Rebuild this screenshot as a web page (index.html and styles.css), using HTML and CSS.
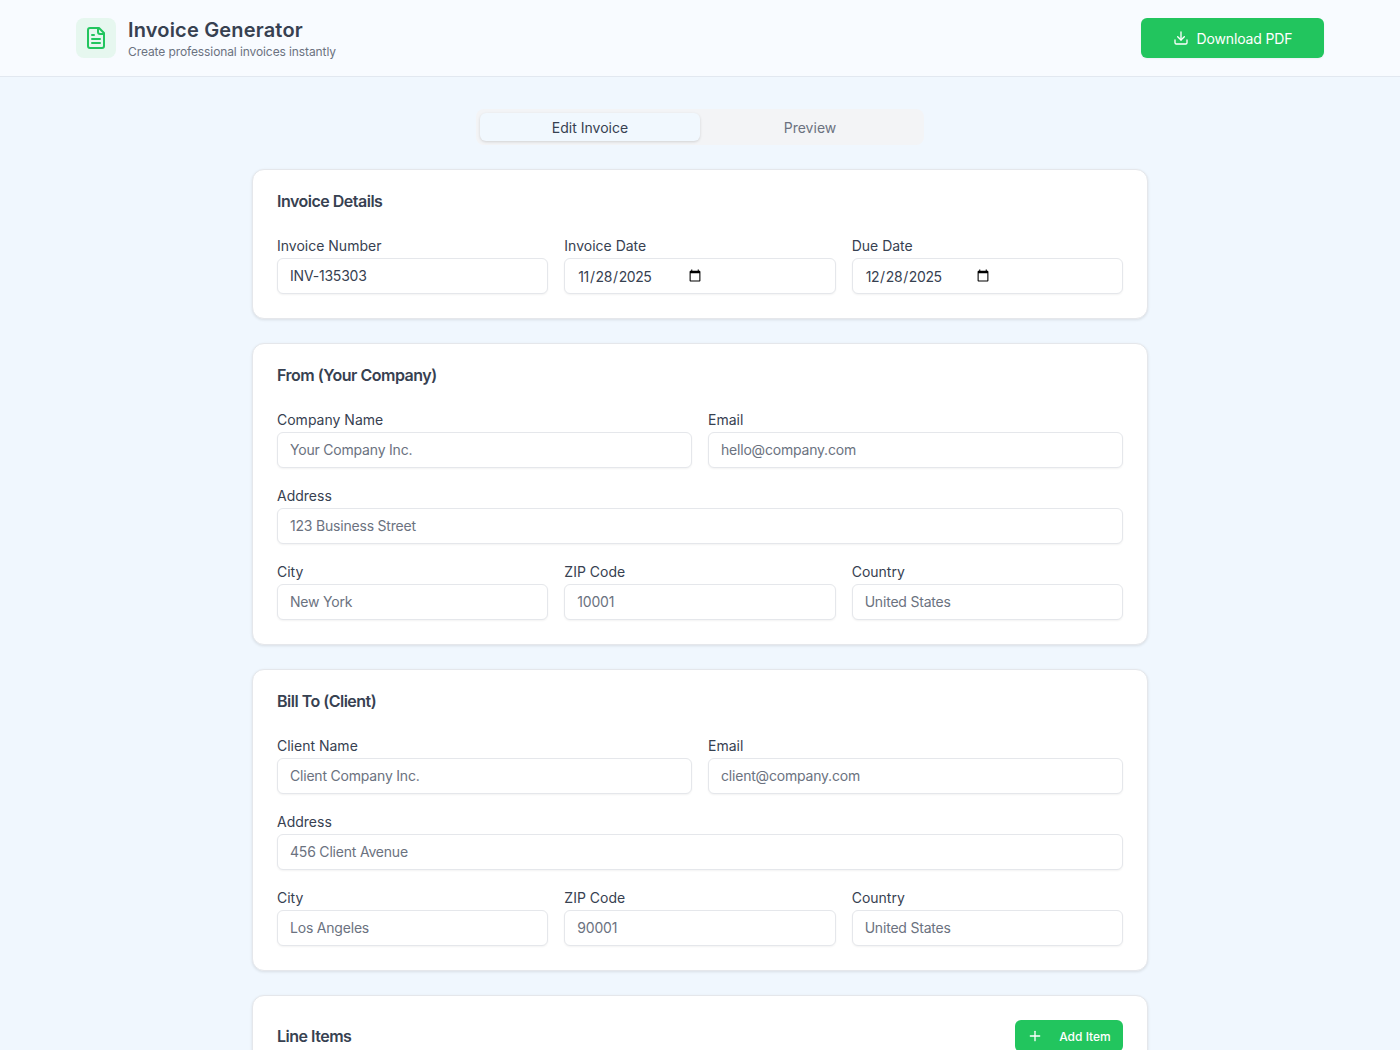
FILE: index.html
```html
<!DOCTYPE html>
<html lang="en">
<head>
<meta charset="utf-8">
<title>Invoice Generator</title>
<link rel="stylesheet" href="styles.css">
</head>
<body>
<header class="topbar">
  <div class="topbar-inner">
    <div class="brand">
      <div class="brand-icon">
        <svg width="24" height="24" viewBox="0 0 24 24" fill="none" stroke="#22c55e" stroke-width="2" stroke-linecap="round" stroke-linejoin="round"><path d="M15 2H6a2 2 0 0 0-2 2v16a2 2 0 0 0 2 2h12a2 2 0 0 0 2-2V7Z"/><path d="M14 2v4a2 2 0 0 0 2 2h4"/><path d="M10 9H8"/><path d="M16 13H8"/><path d="M16 17H8"/></svg>
      </div>
      <div>
        <h1 class="brand-title">Invoice Generator</h1>
        <p class="brand-sub">Create professional invoices instantly</p>
      </div>
    </div>
    <button class="btn btn-download">
      <svg width="16" height="16" viewBox="0 0 24 24" fill="none" stroke="currentColor" stroke-width="2" stroke-linecap="round" stroke-linejoin="round"><path d="M21 15v4a2 2 0 0 1-2 2H5a2 2 0 0 1-2-2v-4"/><polyline points="7 10 12 15 17 10"/><line x1="12" y1="15" x2="12" y2="3"/></svg>
      Download PDF
    </button>
  </div>
</header>
<main class="page">
  <div class="tabs">
    <div class="tab tab-active">Edit Invoice</div>
    <div class="tab">Preview</div>
  </div>

  <section class="card">
    <h2 class="card-title">Invoice Details</h2>
    <div class="rows">
      <div class="grid-3">
        <div><label class="label">Invoice Number</label><input class="input input-value" value="INV-135303"></div>
        <div><label class="label">Invoice Date</label><input class="input input-value input-date" type="date" value="2025-11-28"></div>
        <div><label class="label">Due Date</label><input class="input input-value input-date" type="date" value="2025-12-28"></div>
      </div>
    </div>
  </section>

  <section class="card">
    <h2 class="card-title">From (Your Company)</h2>
    <div class="rows">
      <div class="grid-2">
        <div><label class="label">Company Name</label><input class="input" placeholder="Your Company Inc."></div>
        <div><label class="label">Email</label><input class="input" placeholder="hello@company.com"></div>
      </div>
      <div><label class="label">Address</label><input class="input" placeholder="123 Business Street"></div>
      <div class="grid-3">
        <div><label class="label">City</label><input class="input" placeholder="New York"></div>
        <div><label class="label">ZIP Code</label><input class="input" placeholder="10001"></div>
        <div><label class="label">Country</label><input class="input" placeholder="United States"></div>
      </div>
    </div>
  </section>

  <section class="card">
    <h2 class="card-title">Bill To (Client)</h2>
    <div class="rows">
      <div class="grid-2">
        <div><label class="label">Client Name</label><input class="input" placeholder="Client Company Inc."></div>
        <div><label class="label">Email</label><input class="input" placeholder="client@company.com"></div>
      </div>
      <div><label class="label">Address</label><input class="input" placeholder="456 Client Avenue"></div>
      <div class="grid-3">
        <div><label class="label">City</label><input class="input" placeholder="Los Angeles"></div>
        <div><label class="label">ZIP Code</label><input class="input" placeholder="90001"></div>
        <div><label class="label">Country</label><input class="input" placeholder="United States"></div>
      </div>
    </div>
  </section>

  <section class="card card-items">
    <div class="card-head">
      <h2 class="card-title card-title-flush">Line Items</h2>
      <button class="btn btn-add">
        <svg width="16" height="16" viewBox="0 0 24 24" fill="none" stroke="currentColor" stroke-width="2" stroke-linecap="round" stroke-linejoin="round"><path d="M5 12h14"/><path d="M12 5v14"/></svg>
        Add Item
      </button>
    </div>
  </section>
</main>
</body>
</html>
```
FILE: styles.css
```css
* { box-sizing: border-box; }
html, body { margin: 0; padding: 0; }
body {
  background: #f0f7fe;
  color: #374151;
  font-family: Inter, "Liberation Sans", sans-serif;
  font-size: 14px;
  height: 1050px;
  overflow: hidden;
}
.topbar {
  height: 77px;
  background: #f8fbff;
  border-bottom: 1px solid #e2e8f0;
}
.topbar-inner {
  max-width: 1280px;
  height: 76px;
  margin: 0 auto;
  padding: 0 16px;
  display: flex;
  align-items: center;
  justify-content: space-between;
}
.brand { display: flex; align-items: center; gap: 12px; }
.brand-icon {
  width: 40px;
  height: 40px;
  border-radius: 8px;
  background: #e6f7ef;
  display: flex;
  align-items: center;
  justify-content: center;
}
.brand-title {
  margin: 0;
  font-size: 20px;
  line-height: 28px;
  font-weight: 600;
  color: #374151;
  letter-spacing: .18px;
}
.brand-sub {
  margin: 0;
  font-size: 12px;
  line-height: 16px;
  color: #6b7280;
  letter-spacing: -.1px;
}
.btn {
  border: 0;
  background: #22c55e;
  color: #fff;
  font-family: inherit;
  font-weight: 500;
  border-radius: 6px;
  display: flex;
  align-items: center;
  justify-content: center;
}
.btn-download {
  width: 183px;
  height: 40px;
  gap: 8px;
  font-size: 14px;
  font-weight: 400;
  letter-spacing: -.15px;
  padding-bottom: 1px;
  box-shadow: 0 1px 2px rgba(0, 0, 0, .05);
}
.btn-add {
  width: 108px;
  height: 32px;
  gap: 16px;
  font-size: 12px;
}
.page {
  width: 896px;
  margin: 0 auto;
  padding-top: 32px;
}
.tabs {
  width: 448px;
  height: 36px;
  margin: 0 auto 24px;
  padding: 4px;
  display: grid;
  grid-template-columns: 1fr 1fr;
  background: #f3f4f6;
  border-radius: 8px;
}
.tab {
  display: flex;
  align-items: center;
  justify-content: center;
  border-radius: 6px;
  color: #6b7280;
  font-weight: 400;
}
.tab-active {
  background: #f1f8fe;
  color: #374151;
  box-shadow: 0 1px 3px rgba(0, 0, 0, .14);
}
.card {
  background: #fff;
  border: 1px solid #e5e7eb;
  border-radius: 12px;
  padding: 24px;
  margin-bottom: 24px;
  box-shadow: 0 1px 3px rgba(0, 0, 0, .1);
}
.card-title {
  margin: 0 0 28px;
  font-size: 16px;
  line-height: 14px;
  font-weight: 600;
  letter-spacing: -.5px;
  color: #374151;
}
.card-title-flush { margin: 0; }
.rows { display: flex; flex-direction: column; gap: 18px; }
.grid-2 { display: grid; grid-template-columns: 1fr 1fr; gap: 16px; }
.grid-3 { display: grid; grid-template-columns: 1fr 1fr 1fr; gap: 16px; }
.label {
  display: block;
  font-size: 14px;
  line-height: 20px;
  font-weight: 400;
  letter-spacing: 0;
  color: #374151;
  margin-bottom: 2px;
}
.input {
  display: flex;
  width: 100%;
  height: 36px;
  padding: 0 12px 2px;
  border: 1px solid #e5e7eb;
  border-radius: 6px;
  background: #fff;
  font-family: inherit;
  font-size: 14px;
  letter-spacing: -.2px;
  color: #4b5563;
  box-shadow: 0 1px 2px rgba(0, 0, 0, .05);
  outline: none;
}
.input::placeholder { color: #6b7280; opacity: 1; }
.input-value { color: #374151; }
.input-date { letter-spacing: -.4px; padding-bottom: 0; }
.input-date::-webkit-calendar-picker-indicator { margin-left: 5px; }
.card-items { height: 100px; margin-bottom: 0; }
.card-head { display: flex; align-items: center; justify-content: space-between; }
```
